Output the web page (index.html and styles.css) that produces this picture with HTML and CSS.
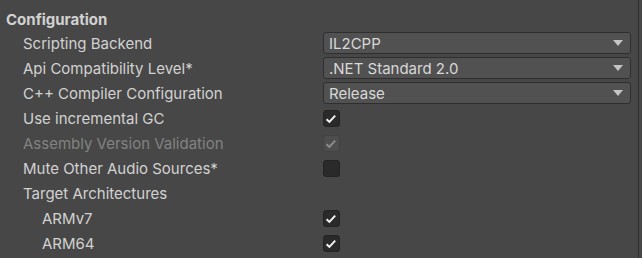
FILE: index.html
```html
<!DOCTYPE html>
<html lang="en">
<head>
  <meta charset="UTF-8">
  <title>Player Settings - Configuration</title>
  <link rel="stylesheet" href="styles.css">
</head>
<body>
  <div class="inspector">
    <div class="section-title">Configuration</div>

    <div class="row">
      <div class="label">Scripting Backend</div>
      <div class="popup"><span>IL2CPP</span><i class="arrow"></i></div>
    </div>
    <div class="row">
      <div class="label">Api Compatibility Level*</div>
      <div class="popup"><span>.NET Standard 2.0</span><i class="arrow"></i></div>
    </div>
    <div class="row">
      <div class="label">C++ Compiler Configuration</div>
      <div class="popup"><span>Release</span><i class="arrow"></i></div>
    </div>
    <div class="row">
      <div class="label">Use incremental GC</div>
      <div class="toggle checked">
        <svg viewBox="0 0 15 15"><path d="M2.6 8.2 L5.4 10.9 L11.2 4.6"/></svg>
      </div>
    </div>
    <div class="row disabled">
      <div class="label">Assembly Version Validation</div>
      <div class="toggle checked">
        <svg viewBox="0 0 15 15"><path d="M2.6 8.2 L5.4 10.9 L11.2 4.6"/></svg>
      </div>
    </div>
    <div class="row">
      <div class="label">Mute Other Audio Sources*</div>
      <div class="toggle"></div>
    </div>
    <div class="row">
      <div class="label">Target Architectures</div>
    </div>
    <div class="row nested">
      <div class="label">ARMv7</div>
      <div class="toggle checked">
        <svg viewBox="0 0 15 15"><path d="M2.6 8.2 L5.4 10.9 L11.2 4.6"/></svg>
      </div>
    </div>
    <div class="row nested">
      <div class="label">ARM64</div>
      <div class="toggle checked">
        <svg viewBox="0 0 15 15"><path d="M2.6 8.2 L5.4 10.9 L11.2 4.6"/></svg>
      </div>
    </div>
  </div>
</body>
</html>
```

FILE: styles.css
```css
body {
  margin: 0;
  background-color: #474747;
  font-family: Inter, "Noto Sans", sans-serif;
  font-size: 15px;
  color: #d2d2d2;
}

.inspector {
  width: 639px;
  height: 258px;
  border-right: 1px solid #2e2e2e;
  box-sizing: border-box;
  padding-top: 9px;
}

.section-title {
  height: 22px;
  line-height: 22px;
  padding-left: 6px;
  font-weight: 700;
  margin-bottom: 1px;
}

.row {
  display: flex;
  align-items: center;
  height: 22px;
  margin-bottom: 3px;
  padding-left: 23px;
}

.row.nested {
  padding-left: 42px;
}

.label {
  flex: 1;
  white-space: nowrap;
}

.row.disabled .label {
  color: #828282;
}

.popup {
  display: flex;
  align-items: center;
  justify-content: space-between;
  width: 308px;
  height: 22px;
  margin-right: 7px;
  padding: 0 7px 0 5px;
  box-sizing: border-box;
  background-color: #515151;
  border: 1px solid #2f2f2f;
  border-radius: 3px;
  color: #d8d8d8;
}

.arrow {
  width: 0;
  height: 0;
  border-left: 5px solid transparent;
  border-right: 5px solid transparent;
  border-top: 6px solid #c4c4c4;
}

.toggle {
  width: 17px;
  height: 17px;
  margin-right: 298px;
  box-sizing: border-box;
  background-color: #2a2a2a;
  border: 1px solid #232323;
  border-radius: 3px;
}

.toggle svg {
  display: block;
  width: 15px;
  height: 15px;
}

.toggle path {
  fill: none;
  stroke: #f2f2f2;
  stroke-width: 2;
}

.row.disabled .toggle {
  background-color: #4e4e4e;
  border-color: #424242;
}

.row.disabled .toggle path {
  stroke: #8c8c8c;
}
```
